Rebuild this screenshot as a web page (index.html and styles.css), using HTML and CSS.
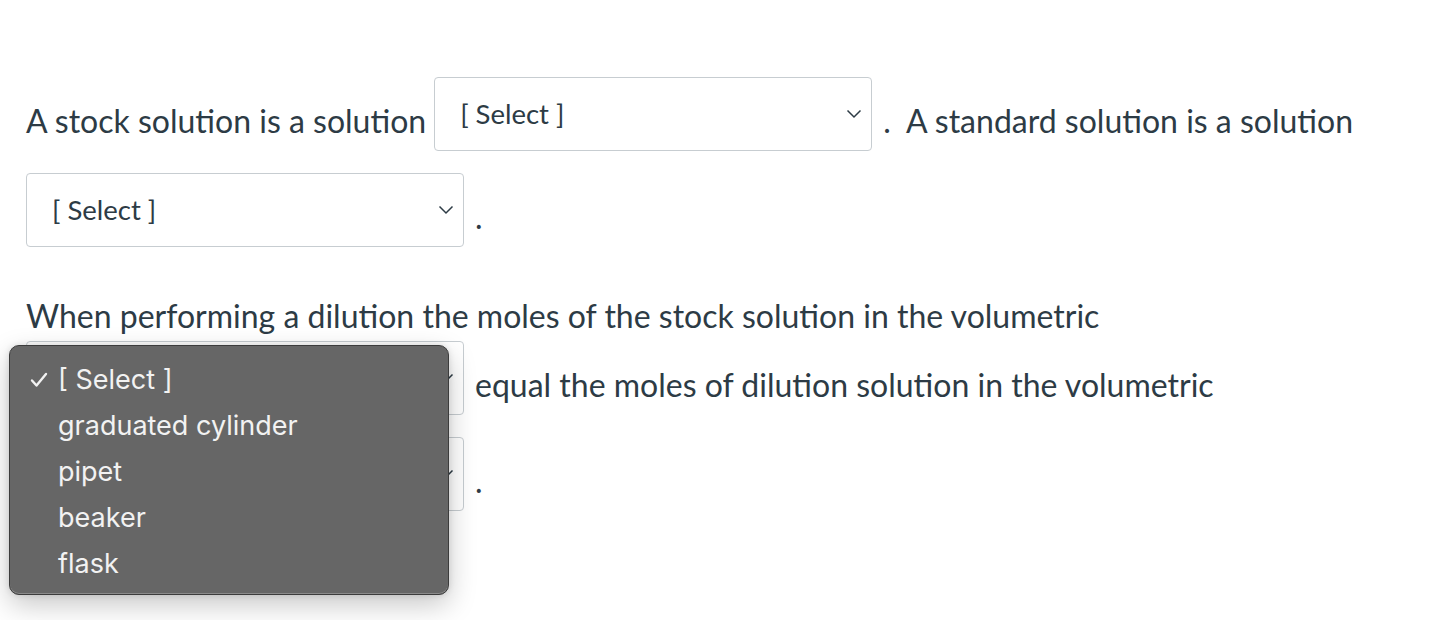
FILE: index.html
```html
<!DOCTYPE html>
<html lang="en">
<head>
<meta charset="utf-8">
<title>Quiz question</title>
<link rel="stylesheet" href="styles.css">
</head>
<body>
<div class="question">
  <div class="para para-1">
    <div class="row">
      <span class="txt">A stock solution is a solution</span>
      <div class="select"><span class="select-label">[ Select ]</span><svg class="chev" width="16" height="10" viewBox="0 0 16 10"><polyline points="1.5,1.5 8,8 14.5,1.5" fill="none" stroke="#2d3b45" stroke-width="1.5"/></svg></div>
      <span class="txt">.&nbsp; A standard solution is a solution</span>
    </div>
    <div class="row">
      <div class="select"><span class="select-label">[ Select ]</span><svg class="chev" width="16" height="10" viewBox="0 0 16 10"><polyline points="1.5,1.5 8,8 14.5,1.5" fill="none" stroke="#2d3b45" stroke-width="1.5"/></svg></div>
      <span class="txt">.</span>
    </div>
  </div>
  <div class="para para-2">
    <p class="line">When performing a dilution the moles of the stock solution in the volumetric</p>
    <div class="row">
      <div class="select"><span class="select-label">[ Select ]</span><svg class="chev" width="16" height="10" viewBox="0 0 16 10"><polyline points="1.5,1.5 8,8 14.5,1.5" fill="none" stroke="#2d3b45" stroke-width="1.5"/></svg></div>
      <span class="txt">equal the moles of dilution solution in the volumetric</span>
    </div>
    <div class="row">
      <div class="select"><span class="select-label">[ Select ]</span><svg class="chev" width="16" height="10" viewBox="0 0 16 10"><polyline points="1.5,1.5 8,8 14.5,1.5" fill="none" stroke="#2d3b45" stroke-width="1.5"/></svg></div>
      <span class="txt">.</span>
    </div>
  </div>
  <ul class="popup">
    <li class="opt checked"><svg class="check" width="18" height="16" viewBox="0 0 18 16"><polyline points="2,8.5 6.5,13.5 16,2" fill="none" stroke="#f2f2f2" stroke-width="2.4" stroke-linecap="round" stroke-linejoin="round"/></svg>[ Select ]</li>
    <li class="opt">graduated cylinder</li>
    <li class="opt">pipet</li>
    <li class="opt">beaker</li>
    <li class="opt">flask</li>
  </ul>
</div>
</body>
</html>
```
FILE: styles.css
```css
html, body {
  margin: 0;
  padding: 0;
  background: #ffffff;
}

html {
  min-height: 620px;
}

body {
  min-height: 620px;
  font-family: Lato, "Open Sans", sans-serif;
  color: #2d3b45;
  font-size: 32px;
  line-height: 38px;
}

.question {
  position: relative;
  padding: 77px 24px 0 26px;
  width: 1400px;
  box-sizing: border-box;
}

.para-1 {
  display: flex;
  flex-direction: column;
  gap: 22px;
}

.para-2 {
  margin-top: 50px;
  display: flex;
  flex-direction: column;
  gap: 6px;
}

.para-2 .row + .row {
  margin-top: 16px;
}

.line {
  margin: 0;
}

.row {
  display: flex;
  align-items: flex-start;
}

.txt {
  margin-top: 25px;
  white-space: nowrap;
}

.select {
  width: 438px;
  height: 74px;
  box-sizing: border-box;
  border: 1px solid #c7cdd1;
  border-radius: 4px;
  background: #fff;
  display: flex;
  align-items: center;
  justify-content: space-between;
  padding: 0 9px 0 25px;
  margin: 0 11px 0 8px;
  flex: none;
}

.row > .select:first-child {
  margin-left: 0;
}

.select-label {
  font-size: 27.5px;
  line-height: 30px;
  margin-top: 0;
}

.chev {
  display: block;
}

.popup {
  position: absolute;
  left: 9px;
  top: 345px;
  width: 440px;
  height: 250px;
  box-sizing: border-box;
  margin: 0;
  padding: 11px 0 9px;
  list-style: none;
  background: #666666;
  border: 1px solid #3c3c3c;
  border-radius: 10px;
  box-shadow: inset 0 -1px 0 #8a8a8a, 0 10px 28px rgba(0, 0, 0, 0.22), 0 0 6px rgba(0, 0, 0, 0.12);
  font-family: Inter, "Noto Sans", sans-serif;
  font-size: 27px;
  line-height: 32px;
  color: #f2f2f2;
}

.opt {
  height: 46px;
  display: flex;
  align-items: center;
  padding-left: 48px;
  position: relative;
}

.check {
  position: absolute;
  left: 20px;
  top: 15px;
}
```
